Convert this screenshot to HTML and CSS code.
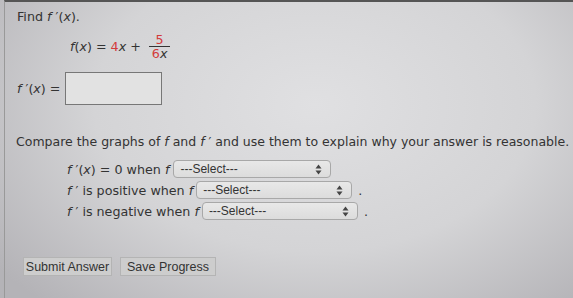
FILE: index.html
```html
<!DOCTYPE html>
<html>
<head>
<meta charset="utf-8">
<link rel="stylesheet" href="styles.css">
</head>
<body>
<div class="page">
  <div class="question">
    <p class="find">Find <i>f</i> ′(<i>x</i>).</p>
    <div class="eq">
      <span><i class="fn">f</i>(<i>x</i>) = <span class="red">4</span><i>x</i> +</span>
      <span class="frac"><span class="num red">5</span><span class="den"><span class="red">6</span><i>x</i></span></span>
    </div>
    <div class="answer">
      <span><i>f</i> ′(<i>x</i>) =</span>
      <span class="box"></span>
    </div>
    <p class="compare">Compare the graphs of <i>f</i> and <i>f</i> ′ and use them to explain why your answer is reasonable.</p>
    <div class="rows">
      <div class="row"><span><i>f</i> ′(<i>x</i>) = 0 when <i>f</i></span><span class="select s1"><span>---Select---</span><svg width="7" height="11" viewBox="0 0 7 11"><path d="M3.5 0.5 L6.5 4.5 H0.5 Z M3.5 10.5 L6.5 6.5 H0.5 Z" fill="#444"/></svg></span></div>
      <div class="row"><span><i>f</i> ′ is positive when <i>f</i></span><span class="select s2"><span>---Select---</span><svg width="7" height="11" viewBox="0 0 7 11"><path d="M3.5 0.5 L6.5 4.5 H0.5 Z M3.5 10.5 L6.5 6.5 H0.5 Z" fill="#444"/></svg></span><span class="dot">.</span></div>
      <div class="row"><span><i>f</i> ′ is negative when <i>f</i></span><span class="select s3"><span>---Select---</span><svg width="7" height="11" viewBox="0 0 7 11"><path d="M3.5 0.5 L6.5 4.5 H0.5 Z M3.5 10.5 L6.5 6.5 H0.5 Z" fill="#444"/></svg></span><span class="dot">.</span></div>
    </div>
  </div>
  <div class="actions">
    <span class="btn b1">Submit Answer</span>
    <span class="btn b2">Save Progress</span>
  </div>
</div>
</body>
</html>
```
FILE: styles.css
```css
html, body {
  margin: 0;
  padding: 0;
}
body {
  width: 573px;
  height: 298px;
  overflow: hidden;
  background: radial-gradient(ellipse 70% 90% at 55% 35%, #e0e0e2 0%, #d4d4d6 55%, #b4b3b7 100%);
  font-family: "DejaVu Sans", Verdana, sans-serif;
  font-size: 12.7px;
  color: #333;
}
.page {
  height: 296px;
  border-top: 2px solid #555;
  border-left: 1px solid #999;
  margin-left: 4px;
  display: flex;
  flex-direction: column;
}
.question {
  padding: 8px 0 0 12px;
}
i {
  font-style: italic;
}
.red {
  color: #d33a3a;
}
.find {
  margin: 0;
  line-height: 14px;
}
.eq {
  display: flex;
  align-items: center;
  gap: 8px;
  margin: 7px 0 0 53px;
  height: 30px;
}
.frac {
  display: inline-flex;
  flex-direction: column;
  align-items: center;
  line-height: 13px;
}
.num {
  padding: 0 3px;
}
.den {
  border-top: 1px solid #333;
  padding: 0 3px;
}
.answer {
  display: flex;
  align-items: center;
  gap: 5px;
  margin-top: 11px;
}
.box {
  width: 95px;
  height: 31px;
  border: 1px solid #777;
  background: #e2e2e2;
}
.compare {
  margin: 30px 0 0 -1px;
  line-height: 14px;
  font-size: 12.5px;
  white-space: nowrap;
}
.rows {
  margin: 11px 0 0 50px;
  display: flex;
  flex-direction: column;
  gap: 3px;
}
.row {
  display: flex;
  align-items: center;
  gap: 4px;
  height: 18px;
}
.select {
  box-sizing: border-box;
  height: 18px;
  border: 1px solid #a8a8a8;
  border-radius: 4px;
  background: linear-gradient(#e8e8e8, #dcdcdc);
  display: flex;
  align-items: center;
  justify-content: space-between;
  padding: 0 8px 0 6px;
  font-family: "Liberation Sans", Arial, sans-serif;
  font-size: 12px;
  color: #333;
}
.s1 { width: 158px; }
.s2 { width: 156px; margin-left: -1px; }
.s3 { width: 156px; margin-left: -1px; }
.dot {
  margin-left: 2px;
}
.actions {
  margin-top: auto;
  margin-bottom: 22px;
  padding-left: 18px;
  display: flex;
  gap: 8px;
  align-items: center;
}
.btn {
  box-sizing: border-box;
  height: 19px;
  display: inline-flex;
  align-items: center;
  justify-content: center;
  background: #cdcdcd;
  border: 1px solid #b4b4b4;
  font-family: "Liberation Sans", Arial, sans-serif;
  font-size: 12.5px;
  color: #333;
}
.b1 { width: 89px; }
.b2 { width: 96px; }
```
